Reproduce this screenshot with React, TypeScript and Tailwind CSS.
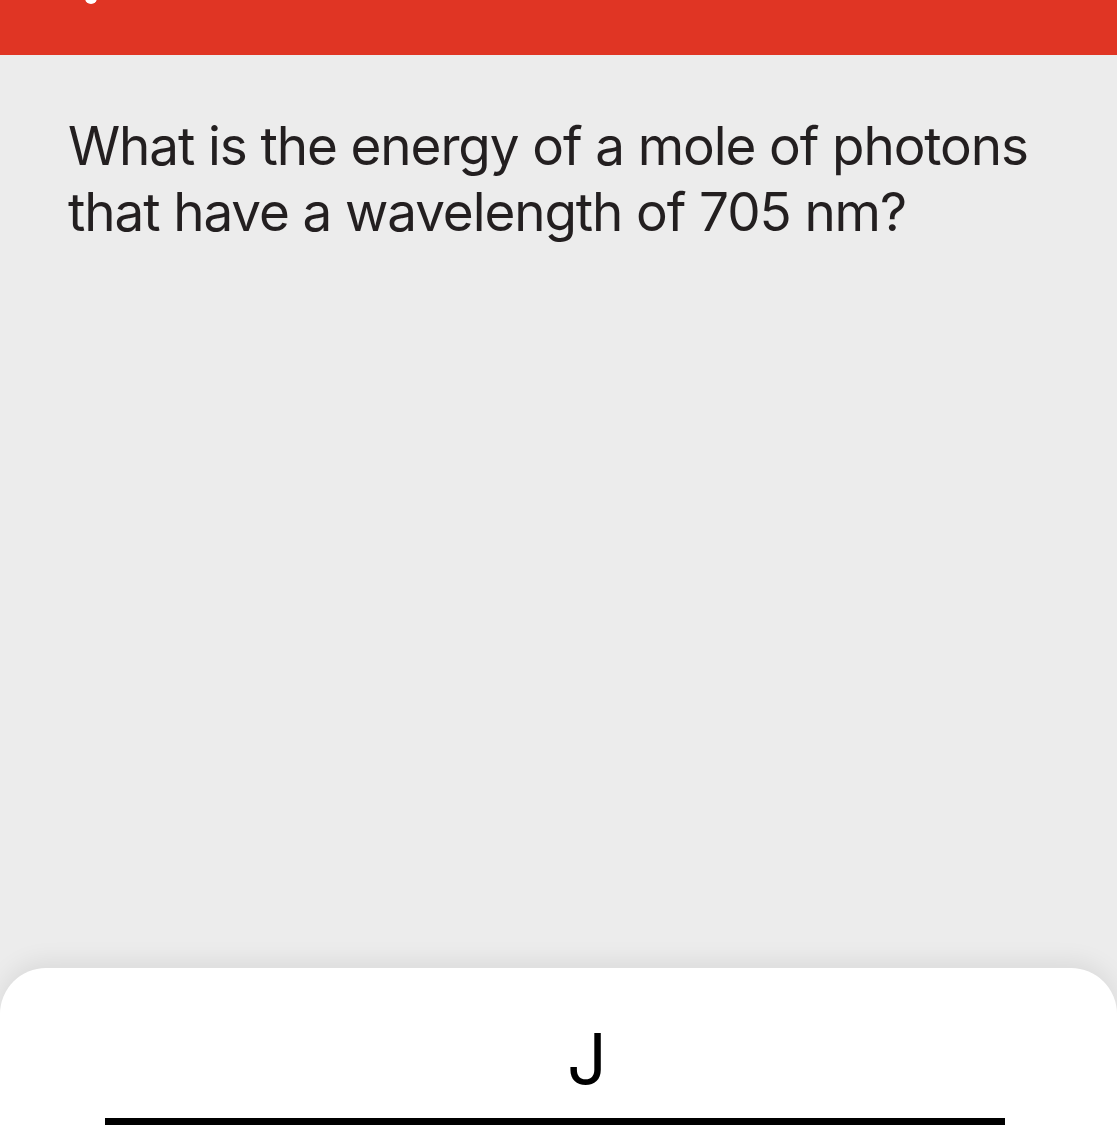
import React from 'react';

const App: React.FC = () => {
    return (
        <div className="h-screen w-full bg-[#ececec] flex flex-col overflow-hidden" style={{ fontFamily: 'Inter, "Noto Sans", sans-serif' }}>
            {/* Header */}
            <div className="relative h-[55px] shrink-0 bg-[#e03524]">
                <div className="absolute left-[85px] top-[-8px] w-[12px] h-[12px] rounded-full bg-white"></div>
            </div>

            {/* Question */}
            <div className="flex-1 pl-[68px] pr-[40px] pt-[58px]">
                <p className="text-[53px] leading-[66px] text-[#231f20] tracking-[-1.1px]">
                    What is the energy of a mole of photons that have a wavelength of 705 nm?
                </p>
            </div>

            {/* Answer panel */}
            <div className="h-[157px] shrink-0 bg-white rounded-t-[46px] shadow-[0_-6px_24px_rgba(0,0,0,0.08)] flex flex-col">
                <div className="pt-[55px] pl-[567px] text-[70px] leading-[71px] text-black">J</div>
                <div className="mt-auto ml-[105px] w-[900px] h-[7px] bg-black"></div>
            </div>
        </div>
    );
};

export default App;
